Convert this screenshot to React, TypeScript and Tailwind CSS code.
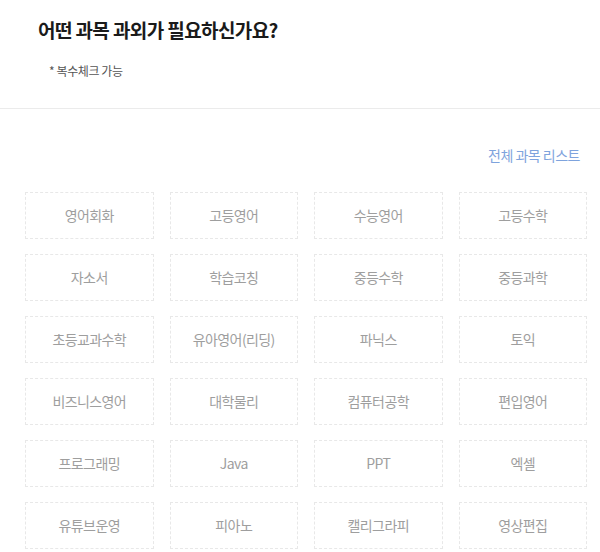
import React from "react";

const subjects = [
  "영어회화", "고등영어", "수능영어", "고등수학",
  "자소서", "학습코칭", "중등수학", "중등과학",
  "초등교과수학", "유아영어(리딩)", "파닉스", "토익",
  "비즈니스영어", "대학물리", "컴퓨터공학", "편입영어",
  "프로그래밍", "Java", "PPT", "엑셀",
  "유튜브운영", "피아노", "캘리그라피", "영상편집",
];

export default function App() {
  return (
    <div
      className="w-[600px] h-[552px] bg-white overflow-hidden"
      style={{ fontFamily: '"Noto Sans CJK KR", "Noto Sans", sans-serif' }}
    >
      <div className="h-[109px] border-b border-[#ebebeb] pl-[38px] pt-[15px]">
        <h1 className="text-[19px] leading-[30px] font-bold text-[#1a1a1a] tracking-[-0.6px]">
          어떤 과목 과외가 필요하신가요?
        </h1>
        <p className="mt-[18px] pl-[11px] text-[12px] leading-[16px] text-[#555] tracking-[-0.4px]">
          * 복수체크 가능
        </p>
      </div>
      <div className="flex justify-end pr-[20px] pt-[36px]">
        <span className="text-[14px] leading-[20px] text-[#7ea3dd] tracking-[-0.5px]">
          전체 과목 리스트
        </span>
      </div>
      <div className="grid grid-cols-4 gap-x-[16px] gap-y-[15px] ml-[25px] w-[562px] mt-[27px]">
        {subjects.map((s) => (
          <div
            key={s}
            className="h-[47px] border border-dashed border-[#e8e8e8] flex items-center justify-center text-[14px] text-[#9e9e9e] tracking-[-0.6px]"
          >
            {s}
          </div>
        ))}
      </div>
    </div>
  );
}
